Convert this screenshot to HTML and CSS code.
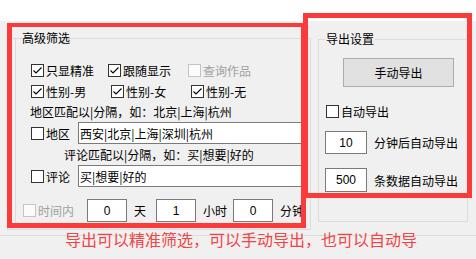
FILE: index.html
```html
<!DOCTYPE html>
<html lang="zh-CN">
<head>
    <meta charset="UTF-8">
    <meta name="viewport" content="width=device-width, initial-scale=1.0">
    <link rel="stylesheet" href="styles.css">
    <title>导出设置</title>
</head>
<body>

<div class="topbar"></div>

<div class="main">
    <div class="frame">
        <fieldset class="group filter">
            <legend>高级筛选</legend>
            <div class="rows">
                <div class="row opts">
                    <label class="chk"><span class="box"><svg width="11" height="11" viewBox="0 0 11 11"><path d="M1.5 5.5l2.5 2.5 5.5-5.5" fill="none" stroke="#000" stroke-width="1.1"/></svg></span>只显精准</label>
                    <label class="chk"><span class="box"><svg width="11" height="11" viewBox="0 0 11 11"><path d="M1.5 5.5l2.5 2.5 5.5-5.5" fill="none" stroke="#000" stroke-width="1.1"/></svg></span>跟随显示</label>
                    <label class="chk off"><span class="box"></span>查询作品</label>
                </div>
                <div class="row opts sex">
                    <label class="chk"><span class="box"><svg width="11" height="11" viewBox="0 0 11 11"><path d="M1.5 5.5l2.5 2.5 5.5-5.5" fill="none" stroke="#000" stroke-width="1.1"/></svg></span>性别-男</label>
                    <label class="chk"><span class="box"><svg width="11" height="11" viewBox="0 0 11 11"><path d="M1.5 5.5l2.5 2.5 5.5-5.5" fill="none" stroke="#000" stroke-width="1.1"/></svg></span>性别-女</label>
                    <label class="chk"><span class="box"><svg width="11" height="11" viewBox="0 0 11 11"><path d="M1.5 5.5l2.5 2.5 5.5-5.5" fill="none" stroke="#000" stroke-width="1.1"/></svg></span>性别-无</label>
                </div>
                <div class="row hint">地区匹配以|分隔，如：北京|上海|杭州</div>
                <div class="row field">
                    <label class="chk"><span class="box"></span>地区</label>
                    <input class="text" type="text" value="西安|北京|上海|深圳|杭州">
                </div>
                <div class="row hint sub">评论匹配以|分隔，如：买|想要|好的</div>
                <div class="row field next">
                    <label class="chk"><span class="box"></span>评论</label>
                    <input class="text" type="text" value="买|想要|好的">
                </div>
                <div class="row time">
                    <label class="chk off"><span class="box"></span>时间内</label>
                    <input class="text" type="text" value="0">
                    <span class="u day">天</span>
                    <input class="text" type="text" value="1">
                    <span class="u">小时</span>
                    <input class="text" type="text" value="0">
                    <span class="u">分钟</span>
                </div>
            </div>
        </fieldset>
    </div>

    <fieldset class="group export">
        <legend>导出设置</legend>
        <button class="btn">手动导出</button>
        <div class="row auto">
            <label class="chk"><span class="box"></span>自动导出</label>
        </div>
        <div class="row num">
            <input class="text" type="text" value="10">
            <span>分钟后自动导出</span>
        </div>
        <div class="row num">
            <input class="text" type="text" value="500">
            <span>条数据自动导出</span>
        </div>
    </fieldset>
</div>

<div class="sep"></div>

<!-- annotations drawn over the form -->
<div class="mark left"></div>
<div class="mark right"></div>
<div class="note">导出可以精准筛选，可以手动导出，也可以自动导</div>

</body>
</html>
```

FILE: styles.css
```css
* {
    box-sizing: border-box;
}

body {
    margin: 0;
    width: 476px;
    height: 259px;
    overflow: hidden;
    position: relative;
    background-color: #f0f0f0;
    font-family: "Noto Sans CJK SC", "Microsoft YaHei", sans-serif;
    font-size: 12px;
    color: #000;
}

.topbar {
    height: 21px;
    background-color: #fff;
}

.main {
    display: flex;
    align-items: flex-start;
    padding: 17px 0 0 7px;
}

.frame {
    width: 304px;
    height: 192px;
    border: 1px solid #dcdcdc;
    padding-left: 7px;
}

.group {
    margin: 0;
    border: 1px solid #dcdcdc;
    min-width: 0;
}

.group legend {
    padding: 0 1px;
    line-height: 14px;
}

.filter {
    margin-top: -8px;
    width: 289px;
    height: 194px;
    padding: 15px 0 0 5px;
}

.rows {
    padding-left: 10px;
}

.row {
    display: flex;
    align-items: center;
    height: 21px;
    white-space: nowrap;
}

.row > * {
    flex-shrink: 0;
}

.opts {
    display: grid;
    grid-template-columns: 77px 80px auto;
}

.opts.sex {
    grid-template-columns: 80px 80px auto;
}

.chk {
    display: inline-flex;
    align-items: center;
}

.box {
    display: inline-flex;
    width: 13px;
    height: 13px;
    margin-right: 2px;
    border: 1px solid #333;
    background-color: #fff;
}

.box svg {
    display: block;
}

.off {
    color: #a0a0a0;
}

.off .box {
    border-color: #c4c4c4;
    background-color: #fbfbfb;
}

.hint {
    height: 18px;
    margin-left: -1px;
}

.hint.sub {
    height: 20px;
    margin-left: 33px;
}

.text {
    margin: 0;
    padding: 0 1px;
    border: 1px solid #7a7a7a;
    background-color: #fff;
    font: inherit;
    color: #000;
    outline: none;
}

.field {
    height: 22px;
    margin-top: 2px;
}

.field.next {
    margin-top: 1px;
}

.field .chk {
    width: 47px;
}

.field .text {
    width: 226px;
    height: 22px;
}

.time {
    height: 23px;
    margin: 12px 0 0 -8px;
}

.time .chk {
    width: 64px;
}

.time .text {
    width: 40px;
    height: 23px;
    text-align: center;
    font-family: "Liberation Sans", sans-serif;
}

.time .u {
    margin: 0 6px 0 7px;
}

.time .day {
    margin-right: 10px;
}

.export {
    margin: -6px 0 0 7px;
    width: 150px;
    height: 190px;
    padding: 12px 0 0 6px;
}

.btn {
    display: block;
    width: 111px;
    height: 29px;
    margin-left: 18px;
    padding: 0;
    border: 1px solid #adadad;
    background-color: #e1e1e1;
    font: inherit;
    color: #000;
}

.export .auto {
    height: 18px;
    margin: 15px 0 0 1px;
}

.num {
    height: 23px;
    margin-top: 11px;
}

.num + .num {
    height: 24px;
    margin-top: 14px;
}

.num .text {
    width: 42px;
    height: 100%;
    margin-right: 7px;
    text-align: center;
    font-family: "Liberation Sans", sans-serif;
}

.sep {
    margin-top: 5px;
    border-top: 1px solid #dcdcdc;
}

.mark {
    position: absolute;
    border: 5px solid #fc3a3a;
}

.mark.left {
    left: 7px;
    top: 23px;
    width: 299px;
    height: 205px;
    border-width: 4px 5px 5px 5px;
}

.mark.right {
    left: 303px;
    top: 13px;
    width: 169px;
    height: 185px;
}

.note {
    position: absolute;
    left: 65px;
    top: 229px;
    font-size: 16px;
    line-height: 20px;
    color: #f24545;
    white-space: nowrap;
}
```
